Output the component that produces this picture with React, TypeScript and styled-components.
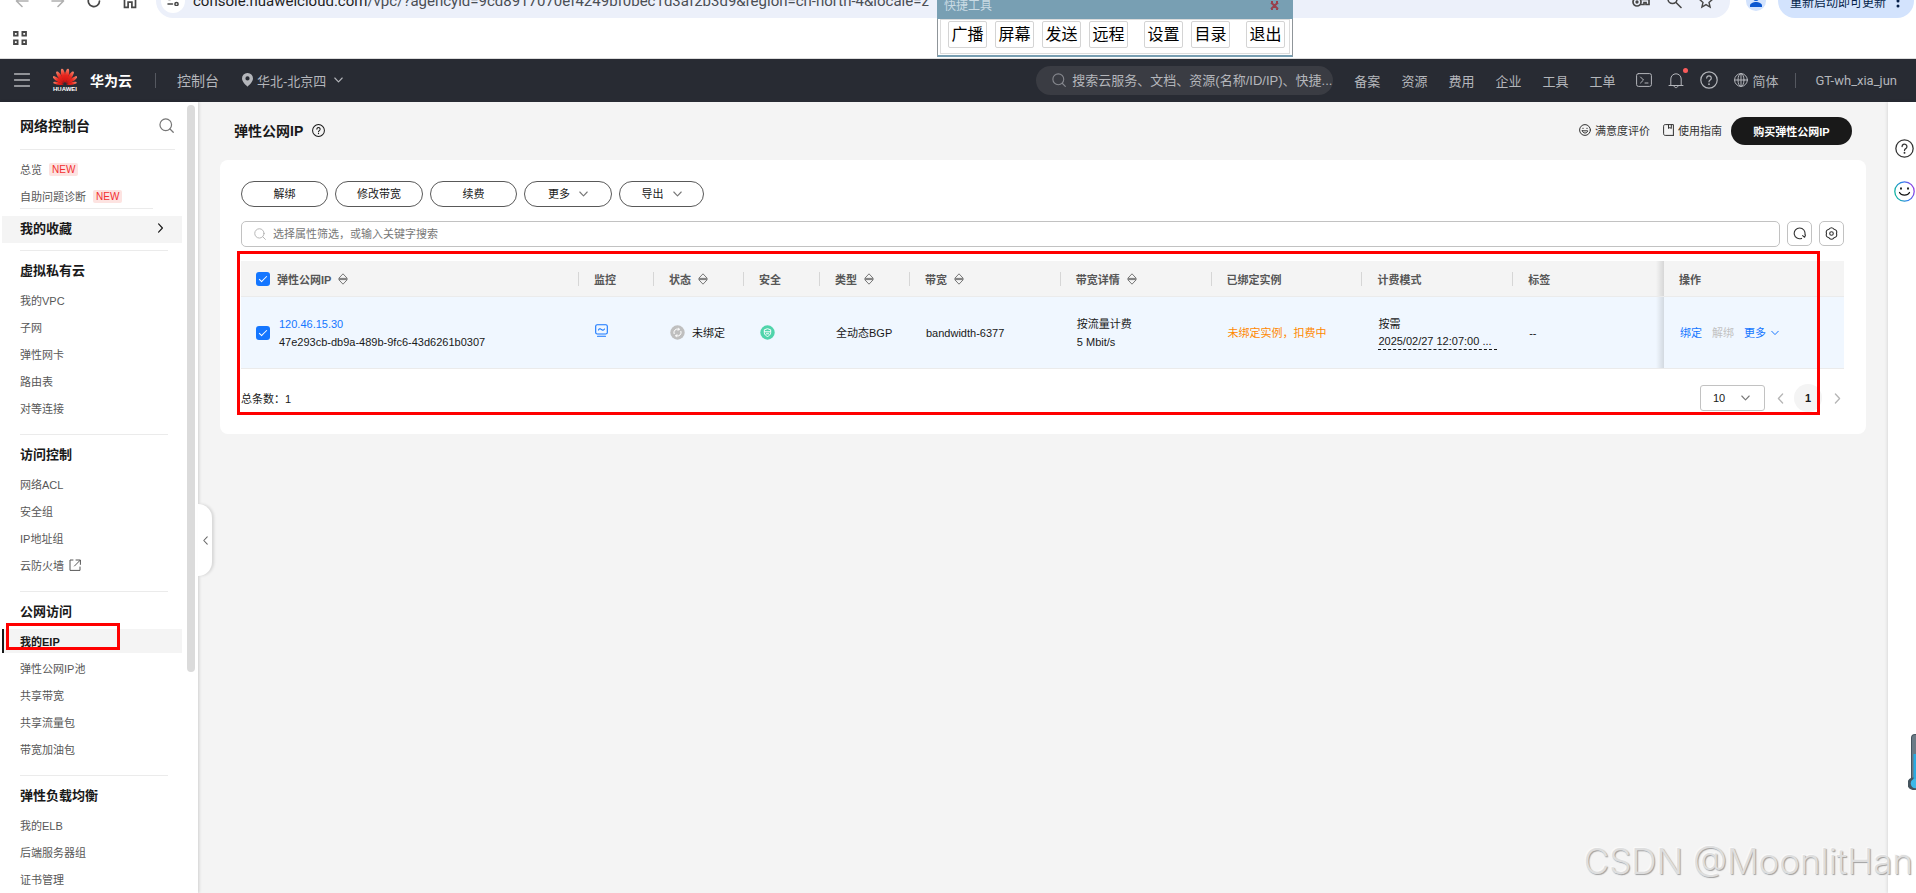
import React from "react";
import styled, { createGlobalStyle, css } from "styled-components";

const GlobalStyle = createGlobalStyle`
  *, *::before, *::after { box-sizing: border-box; }
  html, body { margin: 0; height: 100%; }
  body {
    font-family: "Liberation Sans", "Noto Sans CJK SC", sans-serif;
    font-size: 11px;
    color: #191919;
    background: #f4f4f4;
    overflow: hidden;
  }
  button, input, select { font: inherit; color: inherit; margin: 0; padding: 0; }
  button { border: 0; background: none; cursor: pointer; }
  a { color: inherit; text-decoration: none; }
  ul { list-style: none; margin: 0; padding: 0; }
  h1, h2, h3, p { margin: 0; font-weight: 700; }
  svg { display: block; flex: none; }
`;

/* ---------- icons ---------- */

type IconProps = {
  size?: number;
  width?: number;
  height?: number;
  box?: string;
  stroke?: number;
  children: React.ReactNode;
};

const Icon = ({ size = 16, width, height, box = "0 0 16 16", stroke = 1, children }: IconProps) => (
  <svg
    width={width ?? size}
    height={height ?? size}
    viewBox={box}
    fill="none"
    stroke="currentColor"
    strokeWidth={stroke}
    strokeLinecap="round"
    strokeLinejoin="round"
    aria-hidden="true"
  >
    {children}
  </svg>
);

const SearchIcon = ({ size = 16 }: { size?: number }) => (
  <Icon size={size} stroke={1.3}>
    <circle cx="7.2" cy="7.2" r="6.2" />
    <path d="M11.7 11.7 15.2 15.2" />
  </Icon>
);

const ChevronDown = ({ width = 9 }: { width?: number }) => (
  <Icon width={width} height={6} box="0 0 9 6" stroke={1.1}>
    <path d="M.8 1 4.5 4.8 8.2 1" />
  </Icon>
);

const ChevronSide = ({ left = false, height = 11 }: { left?: boolean; height?: number }) => (
  <Icon width={7} height={height} box="0 0 7 11" stroke={1.3}>
    <path d={left ? "M5.6 1 1.4 5.5l4.2 4.5" : "M1.4 1 5.6 5.5 1.4 10"} />
  </Icon>
);

const HelpIcon = ({ size }: { size: number }) => (
  <Icon size={size} box="0 0 18 18" stroke={size < 16 ? 1.4 : 1.2}>
    <circle cx="9" cy="9" r="8.2" />
    <path d="M6.7 7.1a2.3 2.3 0 1 1 3.5 2c-.8.5-1.2.8-1.2 1.7" />
    <path d="M9 13v.2" strokeWidth="1.7" />
  </Icon>
);

const SortIcon = () => (
  <svg width="10" height="12" viewBox="0 0 10 12" fill="none" stroke="#777" aria-hidden="true">
    <path d="M5 .8 9.300 5.400H.7zM5 11.200 9.300 6.600H.7z" strokeWidth="1" strokeLinejoin="round" />
  </svg>
);

const PETALS = [
  { a: -80, s: 0.78 },
  { a: -56, s: 0.95 },
  { a: -33, s: 1.02 },
  { a: -11, s: 1.06 },
  { a: 11, s: 1.06 },
  { a: 33, s: 1.02 },
  { a: 56, s: 0.95 },
  { a: 80, s: 0.78 },
];

const HuaweiMark = () => (
  <svg width="24" height="18" viewBox="0 0 24 18" aria-hidden="true">
    <defs>
      <linearGradient id="petal" x1="0" y1="0" x2="0" y2="1">
        <stop offset="0" stopColor="#f7856b" />
        <stop offset="0.45" stopColor="#e8261d" />
        <stop offset="1" stopColor="#c9100f" />
      </linearGradient>
    </defs>
    {PETALS.map(({ a, s }) => (
      <path
        key={a}
        d="M0-1.5C-2.4-6-3.2-10-1.5-14.2-.9-15.5.9-15.5 1.5-14.2 3.2-10 2.4-6 0-1.5Z"
        fill="url(#petal)"
        transform={`translate(12 16.6) rotate(${a}) scale(${s * 0.78} ${s})`}
      />
    ))}
  </svg>
);

/* ---------- browser chrome ---------- */

const Page = styled.div`
  position: relative;
  display: flex;
  flex-direction: column;
  height: 100vh;
  overflow: hidden;
`;

const BrowserBar = styled.div`
  display: flex;
  align-items: flex-end;
  height: 18px;
  padding: 0 2px 0 14px;
  overflow: hidden;
  background: #fff;
  color: #474747;
`;

const BrowserButtons = styled.div`
  display: flex;
  align-items: center;
  gap: 20px;
  width: 142px;
  height: 34px;
`;

const BrowserButton = styled.button<{ $dim?: boolean }>`
  color: ${(p) => (p.$dim ? "#b0b0b0" : "#474747")};
`;

const AddressBar = styled.div`
  display: flex;
  flex: 1;
  align-items: center;
  min-width: 0;
  height: 34px;
  padding: 0 16px 0 5px;
  border-radius: 17px;
  background: #ecf0fa;
`;

const SiteInfo = styled.button`
  display: grid;
  place-items: center;
  flex: none;
  width: 24px;
  height: 24px;
  margin-right: 8px;
  border-radius: 12px;
  background: #fff;
`;

const Url = styled.div`
  flex: 1;
  overflow: hidden;
  white-space: nowrap;
  font-family: Roboto, sans-serif;
  font-size: 15px;
  line-height: 20px;
  color: #4a4e54;

  b {
    font-weight: 400;
    color: #1f1f1f;
  }
`;

const AddressIcons = styled.div`
  display: flex;
  align-items: center;
  gap: 16px;
`;

const Avatar = styled.button`
  display: grid;
  place-items: end center;
  width: 20px;
  height: 20px;
  margin: 0 12px 7px 16px;
  border-radius: 10px;
  background: #d3e3fd;
  overflow: hidden;
`;

const UpdateButton = styled.button`
  display: flex;
  align-items: center;
  justify-content: space-between;
  width: 136px;
  height: 34px;
  padding: 0 14px 0 12px;
  border-radius: 17px;
  background: #d3e3fd;
  color: #041e49;
  font-size: 12px;
  white-space: nowrap;
`;

const BookmarkBar = styled.div`
  display: flex;
  align-items: center;
  height: 41px;
  padding: 0 13px;
  border-bottom: 1px solid #dcdcdc;
  background: #fff;
  color: #474747;
`;

/* ---------- floating tool window ---------- */

const ToolWindow = styled.div`
  position: absolute;
  top: 0;
  left: 937px;
  z-index: 3;
  width: 356px;
  border: 1px solid #8f9599;
  border-top: 0;
  border-bottom: 2px solid #789fb3;
  background: #fff;
`;

const ToolTitle = styled.div`
  display: flex;
  justify-content: space-between;
  height: 19px;
  padding: 0 14px 0 7px;
  margin: 0 -1px;
  background: #789fb3;
  color: #c9dbe4;
  font-size: 12px;
  line-height: 12px;
`;

const ToolClose = styled.button`
  height: 11px;
  color: #98404d;
`;

const ToolBody = styled.div`
  display: flex;
  gap: 8px;
  height: 35px;
  margin: 0 2px 1px;
  padding: 1px 0 1px 7px;
  border: 1px solid #dcdcdc;
`;

const ToolButton = styled.button<{ $apart?: boolean }>`
  flex: none;
  width: 39px;
  height: 27px;
  margin-left: ${(p) => (p.$apart ? 8 : 0)}px;
  border: 1px solid #d4d4d4;
  border-radius: 2px;
  color: #000;
  font-size: 16px;
  line-height: 24px;
  white-space: nowrap;
`;

/* ---------- console header ---------- */

const Header = styled.header`
  display: flex;
  align-items: center;
  flex: none;
  height: 43px;
  padding: 0 19px 1px 14px;
  background: #282b33;
  color: #b4b6bb;
  font-size: 13px;
  white-space: nowrap;
`;

const HeaderButton = styled.button`
  position: relative;
  display: flex;
  align-items: center;
  gap: 4px;
`;

const Logo = styled.a`
  display: flex;
  align-items: center;
  gap: 13px;
  margin-left: 23px;
  color: #fff;
  font-size: 14px;
  font-weight: 700;
`;

const LogoMark = styled.span`
  display: flex;
  flex-direction: column;
  align-items: center;
  width: 24px;
  font-size: 6px;
  line-height: 6px;
`;

const HeaderRule = styled.span<{ $before: number; $after: number }>`
  width: 1px;
  height: 15px;
  margin: 0 ${(p) => p.$after}px 0 ${(p) => p.$before}px;
  background: #555860;
`;

const ConsoleLink = styled.a`
  margin-right: 23px;
  font-size: 14px;
`;

const ChevronGap = styled.span`
  margin-left: 4px;
`;

const HeaderSearch = styled.label`
  display: flex;
  align-items: center;
  gap: 6px;
  width: 297px;
  height: 29px;
  margin: 0 21px 0 auto;
  padding: 0 1px 0 16px;
  border-radius: 15px;
  background: #3a3c43;
  color: #85878d;

  input {
    flex: 1;
    min-width: 0;
    border: 0;
    outline: 0;
    background: none;
    text-overflow: ellipsis;
  }
  input::placeholder {
    color: #b4b6bb;
  }
`;

const HeaderNav = styled.nav`
  display: flex;
  gap: 21px;
  margin-right: 21px;
`;

const HeaderIcons = styled.div`
  display: flex;
  align-items: center;
  gap: 16px;
`;

const Dot = styled.span`
  position: absolute;
  top: -4px;
  right: -4px;
  width: 5px;
  height: 5px;
  border-radius: 50%;
  background: #fa5b5b;
`;

const UserName = styled.a`
  font-family: Roboto, sans-serif;
`;

/* ---------- sidebar ---------- */

const Body = styled.div`
  display: flex;
  flex: 1;
  min-height: 0;
`;

const Sidebar = styled.aside`
  position: relative;
  z-index: 1;
  display: flex;
  flex: none;
  width: 198px;
  background: #fff;
  box-shadow: 1px 0 3px rgba(0, 0, 0, 0.16);
`;

const SideScroll = styled.nav`
  flex: 1;
  overflow: hidden;
`;

const ScrollTrack = styled.div`
  width: 11px;
  padding: 3px 3px 0 0;
`;

const ScrollThumb = styled.div`
  width: 8px;
  height: 72%;
  border-radius: 4px;
  background: #dbdbdb;
`;

const SideHead = styled.div`
  display: flex;
  align-items: center;
  justify-content: space-between;
  height: 48px;
  margin: 0 12px 7px 20px;
  padding: 0 1px 1px 0;
  border-bottom: 1px solid #ebebeb;

  h2 {
    font-size: 14px;
  }
  button {
    color: #777;
  }
`;

const SideSection = styled.section`
  padding-bottom: 11px;

  &::before {
    content: "";
    display: block;
    height: 1px;
    margin: 0 19px 0 20px;
    background: #ebebeb;
  }
`;

const SideTitle = styled.h3`
  padding: 5px 0 2px 20px;
  font-size: 13px;
  line-height: 29px;
`;

const SideLink = styled.a<{ $active?: boolean }>`
  display: flex;
  align-items: center;
  gap: 5px;
  height: 24px;
  margin: 1px 5px 3px 2px;
  padding-left: 16px;
  border-left: 2px solid transparent;
  color: #575757;
  white-space: nowrap;
  ${(p) =>
    p.$active &&
    css`
      border-left-color: #191919;
      background: #f4f4f4;
      color: #191919;
      font-weight: 700;
    `}
`;

const TopLinks = styled.div`
  height: 52px;
  margin-bottom: 7px;

  &::after {
    content: "";
    display: block;
    height: 1px;
    margin: -3px 34px 0 20px;
    background: #ebebeb;
  }
`;

const NewTag = styled.span`
  margin-left: 2px;
  padding: 0 3px;
  border-radius: 2px;
  background: #fde3e1;
  color: #f23030;
  font-size: 10px;
  line-height: 13px;
`;

const Favorites = styled.button`
  display: flex;
  align-items: center;
  justify-content: space-between;
  width: 180px;
  height: 27px;
  margin: 0 0 7px 2px;
  padding: 0 18px 4px;
  background: #f4f4f4;
  font-size: 13px;
  font-weight: 700;
`;

const CollapseTab = styled.button`
  position: absolute;
  top: 402px;
  left: 198px;
  display: grid;
  place-items: center;
  width: 14px;
  height: 72px;
  border-radius: 0 14px 14px 0;
  background: #fff;
  box-shadow: 2px 0 3px rgba(0, 0, 0, 0.12);
  color: #666;
`;

/* ---------- main area ---------- */

const Main = styled.main`
  flex: 1;
  min-width: 0;
  padding: 0 22px;
`;

const PageHead = styled.div`
  display: flex;
  align-items: center;
  gap: 13px;
  height: 58px;
  padding: 0 14px;
  color: #333;
`;

const PageTitle = styled.h1`
  display: flex;
  align-items: center;
  gap: 9px;
  margin-right: auto;
  padding-bottom: 2px;
  color: #191919;
  font-size: 14px;
`;

const HeadLink = styled.a`
  display: flex;
  align-items: center;
  gap: 4px;
  padding-bottom: 2px;
`;

const PrimaryButton = styled.button`
  width: 121px;
  height: 28px;
  margin-left: -4px;
  border-radius: 14px;
  background: #191919;
  color: #fff;
  font-weight: 700;
`;

const Card = styled.section`
  padding: 21px 22px 22px 21px;
  border-radius: 8px;
  background: #fff;
`;

const Toolbar = styled.div`
  display: flex;
  gap: 7px;
  margin-bottom: 14px;
`;

const PillButton = styled.button<{ $width: number }>`
  display: flex;
  align-items: center;
  justify-content: center;
  gap: 9px;
  width: ${(p) => p.$width}px;
  height: 26px;
  padding-bottom: 2px;
  border: 1px solid #595959;
  border-radius: 13px;

  svg {
    margin-top: 2px;
    color: #777;
  }
`;

const FilterRow = styled.div`
  display: flex;
  gap: 7px;
  margin-bottom: 14px;
`;

const FilterBox = styled.label`
  display: flex;
  align-items: center;
  gap: 7px;
  flex: 1;
  height: 26px;
  padding: 0 12px;
  border: 1px solid #c2c2c2;
  border-radius: 5px;
  color: #b5b5b5;

  input {
    flex: 1;
    border: 0;
    outline: 0;
    background: none;
  }
  input::placeholder {
    color: #777;
  }
`;

const SquareButton = styled.button`
  display: grid;
  place-items: center;
  width: 25px;
  height: 25px;
  border: 1px solid #c2c2c2;
  border-radius: 5px;
  color: #333;
`;

const ResultArea = styled.div`
  position: relative;
`;

const Table = styled.table`
  width: 100%;
  border-collapse: separate;
  border-spacing: 0;
  table-layout: fixed;
`;

const cell = css`
  position: relative;
  padding: 0 0 0 15px;
  border-bottom: 1px solid #ebebeb;
  text-align: left;
  white-space: nowrap;
`;

const pinned = css`
  &::before {
    content: "";
    position: absolute;
    top: 0;
    bottom: 0;
    left: -8px;
    width: 8px;
    background: linear-gradient(to left, rgba(0, 0, 0, 0.12), rgba(0, 0, 0, 0));
  }
`;

const HeadCell = styled.th<{ $rule?: boolean; $pinned?: boolean }>`
  ${cell}
  height: 36px;
  background: #f4f4f4;
  color: #575757;
  ${(p) => p.$pinned && pinned}
  ${(p) =>
    p.$rule &&
    css`
      &::after {
        content: "";
        position: absolute;
        top: 11px;
        right: 0;
        width: 1px;
        height: 14px;
        background: #d6d6d6;
      }
    `}
`;

const DataCell = styled.td<{ $pinned?: boolean }>`
  ${cell}
  height: 72px;
  padding-left: 16px;
  background: #f0f7ff;
  line-height: 18px;
  ${(p) => p.$pinned && pinned}
`;

const FirstCell = styled(DataCell)`
  padding-left: 15px;
`;

const Line = styled.div<{ $gap?: number }>`
  display: flex;
  align-items: center;
  gap: ${(p) => p.$gap ?? 7}px;
`;

const Checkbox = styled.input`
  position: relative;
  flex: none;
  width: 14px;
  height: 14px;
  border-radius: 3px;
  appearance: none;
  background: #1476ff;

  &::after {
    content: "";
    position: absolute;
    top: 2px;
    left: 5px;
    width: 4px;
    height: 8px;
    border: solid #fff;
    border-width: 0 1px 1px 0;
    transform: rotate(45deg);
  }
`;

const BlueLink = styled.a`
  color: #1476ff;
`;

const MonitorLink = styled(BlueLink)`
  display: block;
  padding-bottom: 4px;
`;

const TextButton = styled.button`
  display: flex;
  align-items: center;
  gap: 5px;
  color: #1476ff;

  &:disabled {
    color: #c2c2c2;
  }
`;

const Warning = styled.span`
  color: #ff8800;
`;

const DateText = styled.span`
  display: block;
  width: 119px;
  line-height: 16px;
  border-bottom: 1px dashed #191919;
  overflow: hidden;
`;

const Footer = styled.div`
  display: flex;
  align-items: center;
  height: 28px;
  margin-top: 15px;
`;

const PageSize = styled.label`
  display: flex;
  align-items: center;
  width: 65px;
  height: 26px;
  margin: 0 12px 0 auto;
  border: 1px solid #c2c2c2;
  border-radius: 3px;
  color: #777;

  select {
    width: 63px;
    height: 24px;
    margin-right: -23px;
    padding-left: 12px;
    border: 0;
    outline: 0;
    appearance: none;
    background: none;
    color: #191919;
  }
`;

const PageArrow = styled.button`
  color: #b5b5b5;
`;

const PageNumber = styled.button`
  width: 28px;
  height: 28px;
  margin: 0 12px 0 10px;
  border-radius: 14px;
  background: #f4f4f4;
  font-weight: 700;
`;

const FooterEnd = styled.span`
  width: 3px;
`;

/* ---------- marks over the page ---------- */

const frame = css`
  position: absolute;
  border: 3px solid #ff0000;
  pointer-events: none;
`;

const TableFrame = styled.div`
  ${frame}
  top: -10px;
  right: 24px;
  bottom: -3px;
  left: -4px;
`;

const MenuAnchor = styled.li`
  position: relative;
`;

const MenuFrame = styled.div`
  ${frame}
  top: -6px;
  left: 6px;
  width: 114px;
  height: 27px;
`;

const Rail = styled.aside`
  display: flex;
  flex: none;
  flex-direction: column;
  align-items: center;
  gap: 23px;
  width: 28px;
  padding: 37px 0 0 4px;
  background: #fff;
  box-shadow: -1px 0 3px rgba(0, 0, 0, 0.1);
  color: #333;
`;

const Thermometer = styled.div`
  position: absolute;
  right: 0;
  top: 734px;
`;

const Watermark = styled.div`
  position: absolute;
  right: 3px;
  bottom: 10px;
  font-family: Inter, sans-serif;
  font-weight: 300;
  font-size: 35px;
  line-height: 44px;
  color: #dedede;
  text-shadow: 1px 1px 1px #a0a0a0, -1px -1px 1px #fafafa;
  pointer-events: none;
`;

/* ---------- data ---------- */

type MenuItem = { text: string; active?: boolean; external?: boolean };

const SECTIONS: { title: string; items: MenuItem[] }[] = [
  {
    title: "虚拟私有云",
    items: [{ text: "我的VPC" }, { text: "子网" }, { text: "弹性网卡" }, { text: "路由表" }, { text: "对等连接" }],
  },
  {
    title: "访问控制",
    items: [{ text: "网络ACL" }, { text: "安全组" }, { text: "IP地址组" }, { text: "云防火墙", external: true }],
  },
  {
    title: "公网访问",
    items: [
      { text: "我的EIP", active: true },
      { text: "弹性公网IP池" },
      { text: "共享带宽" },
      { text: "共享流量包" },
      { text: "带宽加油包" },
    ],
  },
  {
    title: "弹性负载均衡",
    items: [{ text: "我的ELB" }, { text: "后端服务器组" }, { text: "证书管理" }],
  },
];

const COLUMNS: { text: string; sort?: boolean; width?: number }[] = [
  { text: "监控", width: 75 },
  { text: "状态", sort: true, width: 90 },
  { text: "安全", width: 76 },
  { text: "类型", sort: true, width: 90 },
  { text: "带宽", sort: true },
  { text: "带宽详情", sort: true },
  { text: "已绑定实例" },
  { text: "计费模式" },
  { text: "标签" },
];

const TOOLS = ["广播", "屏幕", "发送", "远程", "设置", "目录", "退出"];

/* ---------- parts ---------- */

const Browser = () => (
  <>
    <BrowserBar>
      <BrowserButtons>
        <BrowserButton $dim aria-label="后退">
          <Icon stroke={1.6}><path d="M14 8H3M8 2.5 2.5 8 8 13.5" /></Icon>
        </BrowserButton>
        <BrowserButton $dim aria-label="前进">
          <Icon stroke={1.6}><path d="M2 8h11M8 2.5 13.5 8 8 13.5" /></Icon>
        </BrowserButton>
        <BrowserButton aria-label="刷新">
          <Icon stroke={1.7}><path d="M13.5 8A5.6 5.6 0 1 1 11.6 3.8L13.5 5.5M13.5 1.5v4h-4" /></Icon>
        </BrowserButton>
        <BrowserButton aria-label="主页">
          <Icon stroke={1.7}><path d="M2.5 14.4V6L8 1.6 13.5 6v8.4H9.9V9.2H6.1v5.2z" strokeLinejoin="miter" /></Icon>
        </BrowserButton>
      </BrowserButtons>
      <AddressBar>
        <SiteInfo aria-label="网站信息">
          <Icon width={12} height={10} box="0 0 12 10" stroke={1.5}>
            <circle cx="2.5" cy="2" r="1.6" />
            <path d="M6.5 2H11M1 8h4.5" />
            <circle cx="9.5" cy="8" r="1.6" />
          </Icon>
        </SiteInfo>
        <Url>
          <b>console.huaweicloud.com</b>
          /vpc/?agencyid=9cd8917070ef4249bf0bec1d3af2b3d9&amp;region=cn-north-4&amp;locale=z
        </Url>
        <AddressIcons>
          <Icon width={18} height={12} box="0 0 18 12" stroke={1.7}>
            <circle cx="5" cy="7" r="4" />
            <circle cx="5" cy="7" r=".8" />
            <path d="M8.5 4.5H17v5h-3V7.5h-2v2H9" strokeLinejoin="miter" />
          </Icon>
          <Icon stroke={1.6}><circle cx="6.5" cy="6" r="4.5" /><path d="m10 9.5 5 5" /></Icon>
          <Icon stroke={1.4}>
            <path d="m8 1.6 1.9 4.3 4.7.4-3.6 3.1 1.1 4.6L8 11.6 3.9 14 5 9.4 1.4 6.3l4.7-.4z" strokeLinejoin="miter" />
          </Icon>
        </AddressIcons>
      </AddressBar>
      <Avatar aria-label="用户">
        <svg width="20" height="20" viewBox="0 0 20 20" fill="#0b57d0">
          <circle cx="10" cy="7" r="3" />
          <path d="M4 16v-1.500c0-2 3.500-3.500 6-3.500s6 1.500 6 3.500V16z" />
        </svg>
      </Avatar>
      <UpdateButton>
        重新启动即可更新
        <svg width="4" height="14" viewBox="0 0 4 14" fill="currentColor" aria-hidden="true">
          <circle cx="2" cy="2" r="1.5" /><circle cx="2" cy="7" r="1.5" /><circle cx="2" cy="12" r="1.5" />
        </svg>
      </UpdateButton>
    </BrowserBar>
    <BookmarkBar>
      <BrowserButton aria-label="应用">
        <Icon size={14} box="0 0 14 14" stroke={1.8}>
          <path d="M1 1h3.600v3.600H1zM9.400 1H13v3.600H9.400zM1 9.400h3.600V13H1zM9.400 9.400H13V13H9.400z" strokeLinejoin="miter" />
        </Icon>
      </BrowserButton>
    </BookmarkBar>
  </>
);

const QuickTools = () => (
  <ToolWindow>
    <ToolTitle>
      快捷工具
      <ToolClose aria-label="关闭">
        <Icon size={9} box="0 0 9 9" stroke={2}><path d="M1 1.500 8 8M8 1.500 1 8M1 1h2M6 1h2M1 8.200h2M6 8.200h2" strokeLinecap="butt" /></Icon>
      </ToolClose>
    </ToolTitle>
    <ToolBody>
      {TOOLS.map((t) => (
        <ToolButton key={t} $apart={t === "设置" || t === "退出"}>{t}</ToolButton>
      ))}
    </ToolBody>
  </ToolWindow>
);

const ConsoleHeader = () => (
  <Header>
    <HeaderButton aria-label="菜单">
      <Icon width={16} height={14} box="0 0 16 14" stroke={1.4}>
        <path d="M.5 1h15M.5 7h15M.5 13h15" />
      </Icon>
    </HeaderButton>
    <Logo href="#home">
      <LogoMark><HuaweiMark />HUAWEI</LogoMark>
      华为云
    </Logo>
    <HeaderRule $before={23} $after={21} />
    <ConsoleLink href="#console">控制台</ConsoleLink>
    <HeaderButton>
      <svg width="11" height="14" viewBox="0 0 11 14" fill="currentColor" aria-hidden="true">
        <path fillRule="evenodd" d="M5.500 0A5.400 5.400 0 0 0 0 5.400C0 9 5.500 13.500 5.500 13.500S11 9 11 5.400A5.400 5.400 0 0 0 5.500 0Zm0 3.300a2.100 2.100 0 1 1 0 4.200 2.100 2.100 0 0 1 0-4.200Z" />
      </svg>
      华北-北京四
      <ChevronGap><ChevronDown /></ChevronGap>
    </HeaderButton>
    <HeaderSearch>
      <SearchIcon size={14} />
      <input aria-label="搜索" placeholder="搜索云服务、文档、资源(名称/ID/IP)、快捷..." />
    </HeaderSearch>
    <HeaderNav>
      {["备案", "资源", "费用", "企业", "工具", "工单"].map((t) => (
        <a key={t} href="#nav">{t}</a>
      ))}
    </HeaderNav>
    <HeaderIcons>
      <HeaderButton aria-label="命令行">
        <Icon width={16} height={14} box="0 0 16 14">
          <rect x=".6" y=".6" width="14.800" height="12.800" rx="1.800" />
          <path d="m4.500 4 3 3-3 3M9 10h3" />
        </Icon>
      </HeaderButton>
      <HeaderButton aria-label="消息">
        <Icon width={16} height={17} box="0 0 16 17">
          <path d="M1 13.500h14M2.800 13.500V7a5.200 5.200 0 0 1 10.400 0v6.500M6 13.800c0 2.600 4 2.600 4 0" />
        </Icon>
        <Dot />
      </HeaderButton>
      <HeaderButton aria-label="帮助"><HelpIcon size={18} /></HeaderButton>
      <HeaderButton>
        <Icon size={14} box="0 0 14 14">
          <circle cx="7" cy="7" r="6.400" />
          <ellipse cx="7" cy="7" rx="3" ry="6.400" />
          <path d="M.6 7h12.800M7 .6v12.800" />
        </Icon>
        简体
      </HeaderButton>
    </HeaderIcons>
    <HeaderRule $before={17} $after={19} />
    <UserName href="#user">GT-wh_xia_jun</UserName>
  </Header>
);

const SideMenu = () => (
  <Sidebar>
    <SideScroll>
      <SideHead>
        <h2>网络控制台</h2>
        <button aria-label="搜索菜单"><SearchIcon size={15} /></button>
      </SideHead>
      <TopLinks>
        <SideLink href="#overview">总览<NewTag>NEW</NewTag></SideLink>
        <SideLink href="#diagnose">自助问题诊断<NewTag>NEW</NewTag></SideLink>
      </TopLinks>
      <Favorites>我的收藏<ChevronSide height={10} /></Favorites>
      {SECTIONS.map((s) => (
        <SideSection key={s.title}>
          <SideTitle>{s.title}</SideTitle>
          <ul>
            {s.items.map((it) => (
              <MenuAnchor key={it.text}>
                <SideLink href="#menu" $active={it.active}>
                  {it.text}
                  {it.external && (
                    <Icon size={12} box="0 0 12 12">
                      <path d="M4 1H1v10.400h10V8M7 1h4.400v4.400M11 1.400 5.500 7" />
                    </Icon>
                  )}
                </SideLink>
                {it.active && <MenuFrame />}
              </MenuAnchor>
            ))}
          </ul>
        </SideSection>
      ))}
    </SideScroll>
    <ScrollTrack><ScrollThumb /></ScrollTrack>
    <CollapseTab aria-label="收起"><ChevronSide left height={9} /></CollapseTab>
  </Sidebar>
);

const EipTable = () => (
  <Table>
    <colgroup>
      <col width={338} />
      {COLUMNS.map((c) => <col key={c.text} width={c.width} />)}
      <col width={180} />
    </colgroup>
    <thead>
      <tr>
        <HeadCell $rule>
          <Line>
            <Checkbox type="checkbox" defaultChecked aria-label="全选" />
            弹性公网IP<SortIcon />
          </Line>
        </HeadCell>
        {COLUMNS.map((c) => (
          <HeadCell key={c.text} $rule={c.text !== "标签"}>
            <Line>{c.text}{c.sort && <SortIcon />}</Line>
          </HeadCell>
        ))}
        <HeadCell $pinned>操作</HeadCell>
      </tr>
    </thead>
    <tbody>
      <tr>
        <FirstCell>
          <Line $gap={9}>
            <Checkbox type="checkbox" defaultChecked aria-label="选择 120.46.15.30" />
            <div>
              <BlueLink href="#eip">120.46.15.30</BlueLink>
              <div>47e293cb-db9a-489b-9fc6-43d6261b0307</div>
            </div>
          </Line>
        </FirstCell>
        <DataCell>
          <MonitorLink href="#monitor" aria-label="监控">
            <Icon size={13} box="0 0 13 13" stroke={1.1}>
              <rect x=".7" y=".7" width="11.600" height="9.300" rx="1.500" />
              <path d="M3.500 6c1-1.800 2-1.200 3-.4s2 .8 3-.6M2.500 12.200h8" />
            </Icon>
          </MonitorLink>
        </DataCell>
        <DataCell>
          <Line>
            <svg width="15" height="15" viewBox="0 0 15 15" aria-hidden="true">
              <circle cx="7.500" cy="7.500" r="7.200" fill="#bfbfbf" />
              <path d="M4.200 9A3.600 3.600 0 0 1 9 4.300M10.800 6A3.600 3.600 0 0 1 6 10.700M8.400 2.800 9.500 4.600l-2 .6M6.600 12.200l-1.100-1.800 2-.6" fill="none" stroke="#fff" />
            </svg>
            未绑定
          </Line>
        </DataCell>
        <DataCell>
          <svg width="15" height="15" viewBox="0 0 15 15" aria-hidden="true">
            <circle cx="7.500" cy="7.500" r="7.200" fill="#50d4ab" />
            <path d="M4.300 4.800 7.500 3.700l3.200 1.100v2.700c0 2-1.500 3.200-3.200 4-1.700-.8-3.200-2-3.200-4zM4.300 6.800h6.400M6 8.800h3" fill="none" stroke="#fff" />
          </svg>
        </DataCell>
        <DataCell>全动态BGP</DataCell>
        <DataCell>bandwidth-6377</DataCell>
        <DataCell>按流量计费<br />5 Mbit/s</DataCell>
        <DataCell><Warning>未绑定实例，扣费中</Warning></DataCell>
        <DataCell>
          按需
          <DateText>2025/02/27 12:07:00 ...</DateText>
        </DataCell>
        <DataCell>--</DataCell>
        <DataCell $pinned>
          <Line $gap={10}>
            <TextButton>绑定</TextButton>
            <TextButton disabled>解绑</TextButton>
            <TextButton>更多<ChevronDown width={8} /></TextButton>
          </Line>
        </DataCell>
      </tr>
    </tbody>
  </Table>
);

export default function App() {
  return (
    <Page>
      <GlobalStyle />
      <Browser />
      <QuickTools />
      <ConsoleHeader />
      <Body>
        <SideMenu />
        <Main>
          <PageHead>
            <PageTitle>弹性公网IP<HelpIcon size={13} /></PageTitle>
            <HeadLink href="#rate">
              <Icon size={12} box="0 0 12 12">
                <circle cx="6" cy="6" r="5.400" />
                <path d="M3.300 6.800h5.400c-.3 3-5.100 3-5.400 0zM4 4.200v.4M8 4.200v.4" />
              </Icon>
              满意度评价
            </HeadLink>
            <HeadLink href="#guide">
              <Icon width={11} height={12} box="0 0 11 12">
                <path d="M10.400 11.400V.6H2.200C1.200.6.6 1.200.6 2.200v7.600c0 1 .6 1.600 1.600 1.600h8.200M5.500.8v3.700l1.400-1 1.400 1V.8" />
              </Icon>
              使用指南
            </HeadLink>
            <PrimaryButton>购买弹性公网IP</PrimaryButton>
          </PageHead>
          <Card>
            <Toolbar>
              <PillButton $width={87}>解绑</PillButton>
              <PillButton $width={88}>修改带宽</PillButton>
              <PillButton $width={87}>续费</PillButton>
              <PillButton $width={88}>更多<ChevronDown /></PillButton>
              <PillButton $width={85}>导出<ChevronDown /></PillButton>
            </Toolbar>
            <FilterRow>
              <FilterBox>
                <SearchIcon size={12} />
                <input aria-label="筛选" placeholder="选择属性筛选，或输入关键字搜索" />
              </FilterBox>
              <SquareButton aria-label="刷新列表">
                <Icon size={13} box="0 0 13 13" stroke={1.1}>
                  <path d="M8.600 11.400A5.400 5.400 0 1 1 11.900 7.500M9.600 8.600l2 1.600.9-2.300" />
                </Icon>
              </SquareButton>
              <SquareButton aria-label="设置">
                <Icon size={13} box="0 0 13 13" stroke={1.1}>
                  <path d="M4 2.200Q6.500-.6 9 2.200 12.700 3 11.500 6.500 12.700 10 9 10.800 6.500 13.600 4 10.800.3 10 1.500 6.500.3 3 4 2.200z" />
                  <circle cx="6.500" cy="6.500" r="1.800" />
                </Icon>
              </SquareButton>
            </FilterRow>
            <ResultArea>
              <EipTable />
              <Footer>
                总条数：1
                <PageSize>
                  <select aria-label="每页条数" defaultValue="10">
                    <option>10</option>
                    <option>20</option>
                    <option>50</option>
                  </select>
                  <ChevronDown />
                </PageSize>
                <PageArrow aria-label="上一页"><ChevronSide left /></PageArrow>
                <PageNumber>1</PageNumber>
                <PageArrow aria-label="下一页"><ChevronSide /></PageArrow>
                <FooterEnd />
              </Footer>
              <TableFrame />
            </ResultArea>
          </Card>
        </Main>
        <Rail>
          <HeaderButton aria-label="帮助中心"><HelpIcon size={19} /></HeaderButton>
          <HeaderButton aria-label="智能客服">
            <svg width="21" height="21" viewBox="0 0 21 21" fill="none" aria-hidden="true">
              <defs>
                <linearGradient id="ring" x1="0" y1="0.600" x2="1" y2="0.300">
                  <stop offset="0" stopColor="#12b5a0" />
                  <stop offset="0.550" stopColor="#2f7cf0" />
                  <stop offset="1" stopColor="#9a3fe0" />
                </linearGradient>
              </defs>
              <circle cx="10.500" cy="10.500" r="9.700" stroke="url(#ring)" strokeWidth="1.300" />
              <path d="M7 6.500v2M14 6.500v2" stroke="#111" strokeWidth="1.800" />
              <path d="M5.500 11.500c1.800 3.400 8.200 3.400 10 0" stroke="#111" strokeWidth="1.200" strokeLinecap="round" />
            </svg>
          </HeaderButton>
        </Rail>
      </Body>
      <Thermometer>
        <svg width="8" height="56" viewBox="0 0 8 56" aria-hidden="true">
          <path d="M3 4a4 4 0 0 1 4-4h1v55.500A6 6 0 0 1 3 44z" fill="#45545e" />
          <path d="M4 4a3 3 0 0 1 3-3h1v44H4z" fill="#6b7b86" />
          <circle cx="7" cy="49.500" r="6.400" fill="#45545e" />
          <path d="M5.500 20H8v26H5.500z" fill="#29abe2" />
          <circle cx="7.500" cy="49.500" r="4.800" fill="#3db8e8" />
        </svg>
      </Thermometer>
      <Watermark>CSDN @MoonlitHan</Watermark>
    </Page>
  );
}
